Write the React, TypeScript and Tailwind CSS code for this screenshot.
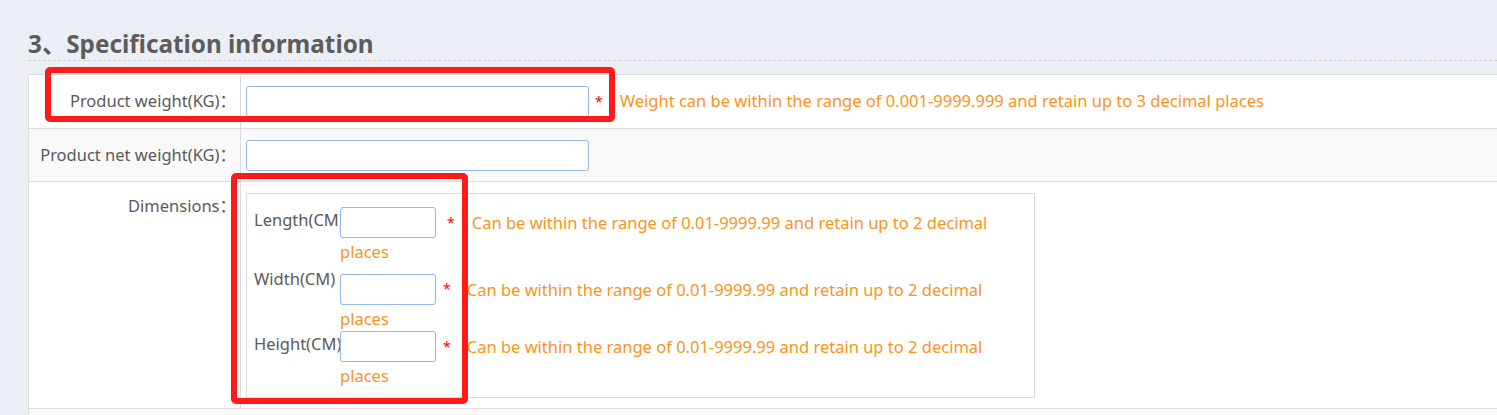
import React from 'react';

const font = { fontFamily: '"Noto Sans", "Noto Sans CJK SC", sans-serif' };

const dims = [
  { label: 'Length(CM)', labelCls: 'mt-[3px]', starCls: 'ml-[11px] mr-[17px]', rowCls: 'mt-0' },
  { label: 'Width(CM)', labelCls: '-mt-[5px]', starCls: 'ml-[7px] mr-[16px]', rowCls: 'mt-[10px]' },
  { label: 'Height(CM)', labelCls: 'mt-[3px]', starCls: 'ml-[7px] mr-[16px]', rowCls: 'mt-[1px]' },
];

const App: React.FC = () => {
  return (
    <div className="relative min-h-[415px] w-full overflow-hidden bg-[#ebeef5] pt-[30px]" style={font}>
      <div className="ml-[28px] border-b border-dashed border-[#cfcfcf] pb-[2px]">
        <h2 className="text-[24.3px] font-bold leading-[28px] text-[#5c5c5c]">3、Specification information</h2>
      </div>

      <div className="ml-[28px] mt-[13px] border-t border-l border-[#dcdcdc] text-[16.5px] text-[#5a5a5a]">
        {/* weight */}
        <div className="grid h-[54px] grid-cols-[212px_1fr] border-b border-[#dcdcdc] bg-white">
          <div className="flex items-center justify-end border-r border-[#dcdcdc] pr-[4px]">Product weight(KG)：</div>
          <div className="flex items-center pl-[5px]">
            <input className="h-[31px] w-[343px] rounded-[3px] border border-[#95b8e7] bg-white outline-none" />
            <span className="ml-[6px] text-[14px] text-[#ff0000]">*</span>
            <span className="ml-[17px] text-[#f7941d]">
              Weight can be within the range of 0.001-9999.999 and retain up to 3 decimal places
            </span>
          </div>
        </div>

        {/* net weight */}
        <div className="grid h-[53px] grid-cols-[212px_1fr] border-b border-[#dcdcdc] bg-[#f9f9f9]">
          <div className="flex items-center justify-end border-r border-[#dcdcdc] pr-[4px]">Product net weight(KG)：</div>
          <div className="flex items-center pl-[5px]">
            <input className="h-[31px] w-[343px] rounded-[3px] border border-[#95b8e7] bg-white outline-none" />
          </div>
        </div>

        {/* dimensions */}
        <div className="grid grid-cols-[212px_1fr] border-b border-[#dcdcdc] bg-white">
          <div className="flex justify-end border-r border-[#dcdcdc] pr-[4px] pt-[12px]">Dimensions：</div>
          <div className="pb-[10px] pl-[5px] pt-[11px]">
            <div className="w-[789px] border border-[#dcdcdc] pb-[9px] pl-[7px] pr-[8px] pt-[13px]">
              {dims.map((d) => (
                <div key={d.label} className={`flex items-start ${d.rowCls}`}>
                  <div className={`w-[86px] shrink-0 leading-[20px] ${d.labelCls}`}>{d.label}</div>
                  <div className="leading-[24px]">
                    <input className="h-[31px] w-[96px] rounded-[3px] border border-[#95b8e7] bg-white align-middle outline-none" />
                    <span className={`align-middle text-[14px] text-[#ff0000] ${d.starCls}`}>*</span>
                    <span className="align-middle text-[#f7941d]">
                      Can be within the range of 0.01-9999.99 and retain up to 2 decimal places
                    </span>
                  </div>
                </div>
              ))}
            </div>
          </div>
        </div>

        <div className="h-[20px] bg-[#f9f9f9]" />
      </div>

      {/* annotation boxes */}
      <div className="pointer-events-none absolute left-[45px] top-[67px] h-[55px] w-[570px] rounded-[5px] border-[6px] border-[#ff1a1a]" />
      <div className="pointer-events-none absolute left-[231px] top-[173px] h-[231px] w-[237px] rounded-[5px] border-[6px] border-[#ff1a1a]" />
    </div>
  );
};

export default App;
